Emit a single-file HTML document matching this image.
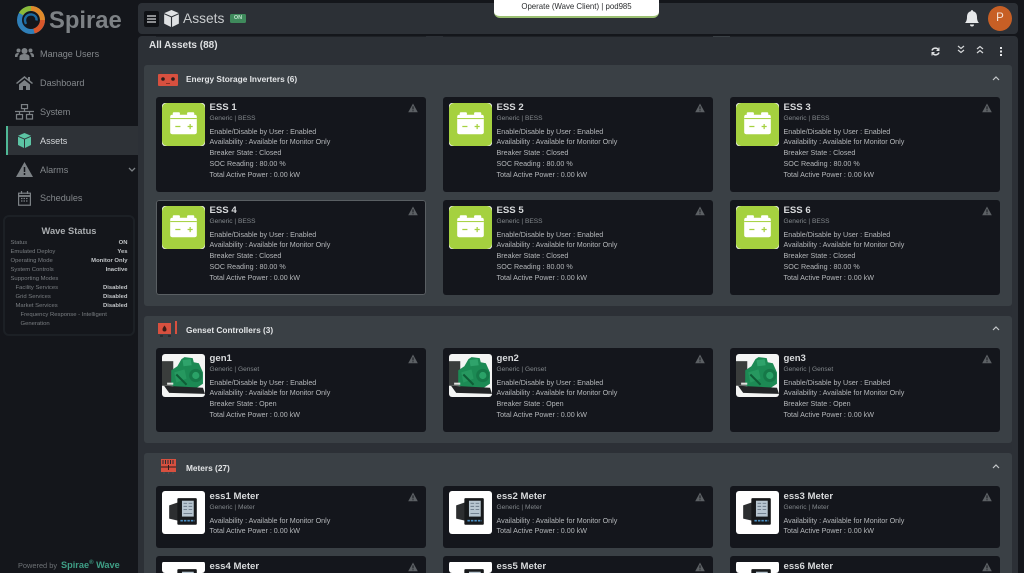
<!DOCTYPE html>
<html><head><meta charset="utf-8"><title>Assets</title>
<style>
html,body{margin:0;padding:0;background:#14161b;width:1024px;height:573px;overflow:hidden}
#root{position:absolute;left:0;top:0;width:1024px;height:573px;overflow:hidden;font-family:"Liberation Sans",sans-serif;background:#14161b}
.abs{position:absolute;white-space:nowrap}
.panel{position:absolute;left:138px;top:36px;width:880px;height:537px;background:#2c3036;border-radius:4px 4px 0 0}
.head{position:absolute;left:138px;top:3px;width:880px;height:31px;background:#2c3036;border-radius:4px}
.group{position:absolute;left:144px;width:868px;background:#3a4045;border-radius:3px}
.gt{position:absolute;left:186px;font-size:8.3px;font-weight:bold;color:#e3e5e7;white-space:nowrap;line-height:12px}
.c{position:absolute;width:270px;background:#14161c;border-radius:3px;overflow:hidden}
.c .im{position:absolute;left:6px;top:6px;width:42.500px;height:42.500px;border-radius:3px;overflow:hidden}
.c .im.m{top:5px}
.c .t{position:absolute;left:53.500px;top:5px;font-size:9.600px;font-weight:bold;color:#d8dadc;line-height:12px;white-space:nowrap}
.c .s{position:absolute;left:53.500px;top:17px;font-size:6.600px;color:#83888c;line-height:10px;white-space:nowrap}
.c .l{position:absolute;left:53.500px;top:29.500px;font-size:7.150px;color:#b4b7ba;line-height:10.750px;white-space:nowrap}
.c .w{position:absolute;left:252px;top:5.500px}
.nav{position:absolute;left:40px;font-size:9.100px;color:#84888c;line-height:12px;white-space:nowrap}
.nic{position:absolute}
.r{position:absolute;left:10.500px;width:117px;font-size:5.900px;line-height:9px;color:#7a7e82;white-space:nowrap}
.r b{position:absolute;right:0;top:0;color:#c2c5c8;font-weight:bold}
</style></head>
<body>
<div id="root">
<svg width="0" height="0" style="position:absolute">
<defs>
<symbol id="batt" viewBox="0 0 42 42"><rect width="42" height="42" fill="#fff"/><rect width="42" height="42" rx="5" fill="#a5d13f"/><rect x="10.500" y="9" width="7" height="3" rx="1" fill="#fff"/><rect x="24.500" y="9" width="7" height="3" rx="1" fill="#fff"/><rect x="8" y="11.500" width="26" height="19" rx="2" fill="#fff"/><rect x="8" y="14.700" width="26" height="1" fill="#a5d13f"/><path d="M13 23h5M25 23h5M27.500 20.500v5" stroke="#a5d13f" stroke-width="1.200"/></symbol>
<symbol id="warn" viewBox="0 0 10 10"><path d="M5 .5 9.800 9.200H.2z" fill="#5c6064"/><path d="M5 3.400v3M5 7.200v1" stroke="#14161c" stroke-width="1"/></symbol>
<symbol id="gen" viewBox="0 0 42 42"><rect width="42" height="42" fill="#f4f5f4"/><rect x="0" y="7" width="11" height="24" fill="#3a3d3c"/><path d="M9 16 15 12 19 5 22 3 30 4 31 8 36 9 40 18 40 29 34 33 16 35 9 30z" fill="#1c8a54"/><path d="M20 6 28 5 29 11 21 12z" fill="#2fa36b"/><path d="M12 18 22 15 24 24 14 28z" fill="#26985f"/><circle cx="33" cy="21" r="6.500" fill="#167848"/><circle cx="33" cy="21" r="3.500" fill="#2aa267"/><path d="M2 31 40 33 42 39 7 38z" fill="#222426"/><path d="M14 20 24 30" stroke="#0f5c36" stroke-width="2"/><rect x="5" y="28" width="6" height="2" fill="#dfe2df"/></symbol>
<symbol id="meter" viewBox="0 0 42 42"><rect width="42" height="42" fill="#fff"/><path d="M7 14 16 11 16 29 7 27z" fill="#2c2e30"/><rect x="15" y="7" width="19" height="26" rx="1" fill="#17191b"/><rect x="19.500" y="9.500" width="11.500" height="15.500" fill="#b8c6d0"/><path d="M21 12h3.500M26 12h3.500M21 15h3.500M26 15h3.500M21 18h3.500M26 18h3.500M21 22h8.500" stroke="#6b7a88" stroke-width=".9"/><path d="M18 29h14" stroke="#4a8fc4" stroke-width="1.600" stroke-dasharray="2.400 1"/></symbol>
</defs>
</svg>

<!-- Sidebar -->
<svg class="abs" style="left:16px;top:5px" width="30" height="30" viewBox="0 0 30 30" fill="none">
<circle cx="15" cy="15" r="11.500" stroke="#2f7fb8" stroke-width="5"/>
<path d="M15 3.500A11.500 11.500 0 0 1 26.500 15" stroke="#e08a2a" stroke-width="5"/>
<path d="M5 9A11.500 11.500 0 0 1 15 3.500" stroke="#8bbb3a" stroke-width="5"/>
<path d="M26.500 15A11.500 11.500 0 0 1 18 26" stroke="#d8562a" stroke-width="5"/>
<path d="M10 19C7 13 11 9 16 9.500c3 .5 5 3 4.500 6" stroke="#1c6aa0" stroke-width="2.400"/>
</svg>
<div class="abs" style="left:49px;top:5px;font-size:23.800px;font-weight:bold;color:#7d8185;line-height:32px">Spirae</div>

<svg class="nic" style="left:15px;top:47px" width="19" height="14" viewBox="0 0 19 14" fill="#7c8185"><circle cx="9.500" cy="4" r="3"/><circle cx="3.500" cy="3.500" r="2"/><circle cx="15.500" cy="3.500" r="2"/><path d="M4.500 13V10c0-2 2-3 5-3s5 1 5 3v3z"/><path d="M0 9c0-2 1-3 3.500-3L4 7c-1 .5-1.500 1.500-1.500 3H0zM19 9c0-2-1-3-3.500-3L15 7c1 .5 1.500 1.500 1.500 3H19z"/></svg>
<div class="nav" style="top:48px">Manage Users</div>
<svg class="nic" style="left:16px;top:76px" width="17" height="14" viewBox="0 0 17 14" fill="#7c8185"><path d="M8.500 0 0 7l1 1 7.500-6 7.500 6 1-1-3-2.500V1h-2v2z"/><path d="M3 8.500 8.500 4l5.500 4.500V14h-4v-4H7v4H3z"/></svg>
<div class="nav" style="top:77px">Dashboard</div>
<svg class="nic" style="left:15px;top:104px" width="19" height="16" viewBox="0 0 19 16" fill="none" stroke="#7c8185" stroke-width="1.200"><rect x="6.500" y=".6" width="6" height="4"/><rect x="1.500" y="10.500" width="6" height="4.500"/><rect x="11.500" y="10.500" width="6" height="4.500"/><path d="M9.500 4.600V7.500M0 7.500H19M4.500 7.500V10.500M14.500 7.500V10.500"/></svg>
<div class="nav" style="top:106px">System</div>

<div class="abs" style="left:6px;top:126px;width:132px;height:29px;background:#2e3237;border-left:2px solid #4fb896;box-sizing:border-box"></div>
<svg class="nic" style="left:18px;top:133px" width="13" height="15" viewBox="0 0 13 15"><path d="M6.500 0 13 2.800 6.500 5.600 0 2.800z" fill="#5cc4a4"/><path d="M0 3.800 6 6.400V15L0 12z" fill="#5cc4a4"/><path d="M13 3.800 7 6.400V15l6-3z" fill="#5cc4a4"/></svg>
<div class="nav" style="top:135px;color:#d4d7da">Assets</div>

<svg class="nic" style="left:16px;top:162px" width="17" height="15" viewBox="0 0 17 15"><path d="M8.500 0 17 15H0z" fill="#7c8185"/><path d="M8.500 5v5M8.500 11v2" stroke="#14161b" stroke-width="1.500"/></svg>
<div class="nav" style="top:164px">Alarms</div>
<svg class="nic" style="left:128px;top:167px" width="8" height="5" viewBox="0 0 8 5" fill="none"><path d="M1 1l3 3 3-3" stroke="#7c8185" stroke-width="1.300"/></svg>
<svg class="nic" style="left:18px;top:191px" width="13" height="15" viewBox="0 0 13 15" fill="none" stroke="#7c8185" stroke-width="1.200"><rect x=".6" y="2.200" width="11.800" height="12"/><path d="M3.500 0v3M9.500 0v3"/><path d="M.6 5h11.800" stroke-width="1.800"/><path d="M3 7.500h7M3 10h7" stroke-width="1.300" stroke-dasharray="1.500 1"/></svg>
<div class="nav" style="top:192px">Schedules</div>

<div class="abs" style="left:3px;top:215px;width:132px;height:121px;border:2px solid #1c2025;border-radius:6px;background:#14161b;box-sizing:border-box"></div>
<div class="abs" style="left:3px;width:132px;top:225px;text-align:center;font-size:9.300px;font-weight:bold;color:#a9acaf;line-height:12px">Wave Status</div>
<div class="r" style="top:238.500px">Status<b>ON</b></div>
<div class="r" style="top:247.500px">Emulated Deploy<b>Yes</b></div>
<div class="r" style="top:256.500px">Operating Mode<b>Monitor Only</b></div>
<div class="r" style="top:265.500px">System Controls<b>Inactive</b></div>
<div class="r" style="top:274.500px">Supporting Modes</div>
<div class="r" style="top:283.500px"><span style="margin-left:5px">Facility Services</span><b>Disabled</b></div>
<div class="r" style="top:292.500px"><span style="margin-left:5px">Grid Services</span><b>Disabled</b></div>
<div class="r" style="top:301.500px"><span style="margin-left:5px">Market Services</span><b>Disabled</b></div>
<div class="r" style="top:310.500px"><span style="margin-left:10px">Frequency Response - Intelligent</span></div>
<div class="r" style="top:319.500px"><span style="margin-left:10px">Generation</span></div>

<div class="abs" style="left:18px;top:561px;font-size:7.400px;color:#6d7175;line-height:10px">Powered by</div>
<div class="abs" style="left:61px;top:559px;font-size:9.200px;font-weight:bold;color:#3f9f86;line-height:12px">Spirae<sup style="font-size:6px;line-height:0">®</sup> Wave</div>

<!-- Header -->
<div class="head"></div>
<div class="abs" style="left:144px;top:11px;width:15px;height:16px;background:#0f1115;border-radius:2px"></div>
<svg class="abs" style="left:147px;top:15px" width="9" height="8" viewBox="0 0 9 8"><path d="M0 1h9M0 4h9M0 7h9" stroke="#d8dadc" stroke-width="1.200"/></svg>
<svg class="abs" style="left:164px;top:10px" width="15" height="17" viewBox="0 0 13 15"><path d="M6.500 0 13 2.800 6.500 5.600 0 2.800z" fill="#dfe1e3"/><path d="M0 3.800 6 6.400V15L0 12z" fill="#dfe1e3"/><path d="M13 3.800 7 6.400V15l6-3z" fill="#dfe1e3"/></svg>
<div class="abs" style="left:183px;top:10px;font-size:13.800px;color:#c9ccce;line-height:17px">Assets</div>
<div class="abs" style="left:230px;top:13.500px;width:16px;height:9.500px;background:#3f8a5c;border-radius:1.500px;color:#bfe3cd;font-size:5.500px;font-weight:bold;line-height:9.500px;text-align:center">ON</div>

<div class="abs" style="left:494px;top:0;width:165px;height:18px;background:#fff;border-bottom:2px solid #9cc073;border-radius:0 0 6px 6px;box-sizing:border-box"></div>
<div class="abs" style="left:494px;top:1.500px;width:165px;text-align:center;font-size:7.850px;color:#2a2c2e;line-height:10px">Operate (Wave Client) | pod985</div>

<svg class="abs" style="left:965px;top:10px" width="14" height="17" viewBox="0 0 14 17" fill="#e6e8ea"><path d="M7 0c.7 0 1 .5 1 1.200C10.800 1.800 12 4 12 7c0 3 .8 4.800 2 6H0c1.200-1.200 2-3 2-6 0-3 1.200-5.200 4-5.800C6 .5 6.300 0 7 0z"/><path d="M5 14.500h4a2 2 0 0 1-4 0z"/></svg>
<div class="abs" style="left:988px;top:6px;width:24px;height:25px;background:#c75f25;border-radius:50%;color:#f5e6dc;font-size:11.500px;line-height:25px;text-align:center">P</div>

<!-- Main -->
<div class="panel"></div>
<div class="abs" style="left:149px;top:38.500px;font-size:10px;font-weight:bold;color:#dfe1e3;line-height:13px">All Assets (88)</div>
<svg class="abs" style="left:931px;top:47px" width="9" height="9" viewBox="0 0 9 9" fill="none" stroke="#e0e2e4" stroke-width="1.500"><path d="M1 3.500A3.600 3.600 0 0 1 7.500 3M8 5.500A3.600 3.600 0 0 1 1.500 6"/><path d="M8 .5v3H5.500M1 8.500v-3h2.500" stroke-width="1"/></svg>
<svg class="abs" style="left:957px;top:45px" width="8" height="9" viewBox="0 0 8 9" fill="none" stroke="#d5d7d9" stroke-width="1.200"><path d="M1 1l3 2.500L7 1M1 5l3 2.500L7 5"/></svg>
<svg class="abs" style="left:976px;top:45px" width="8" height="9" viewBox="0 0 8 9" fill="none" stroke="#d5d7d9" stroke-width="1.200"><path d="M1 4l3-2.500L7 4M1 8l3-2.500L7 8"/></svg>
<svg class="abs" style="left:998.500px;top:47px" width="4" height="9" viewBox="0 0 4 9" fill="#e6e8ea"><rect x="1" y="0" width="2" height="2"/><rect x="1" y="3.500" width="2" height="2"/><rect x="1" y="7" width="2" height="2"/></svg>
<div class="abs" style="left:712px;top:36px;width:18px;height:1px;background:#3a4045"></div>
<div class="abs" style="left:156px;top:36px;width:270px;height:1px;background:#1e2126"></div>
<div class="abs" style="left:443px;top:36px;width:270px;height:1px;background:#1e2126"></div>
<div class="abs" style="left:730px;top:36px;width:270px;height:1px;background:#1e2126"></div>

<!-- Group 1 -->
<div class="group" style="top:65px;height:241px"></div>
<svg class="abs" style="left:158px;top:69px" width="20" height="18" viewBox="0 0 20 18"><path d="M3 5V2M17 5V2" stroke="#4a3a3a" stroke-width="1.200"/><rect x="0" y="5" width="20" height="12" rx="1" fill="#d7503f"/><circle cx="5" cy="10" r="1.800" fill="#2a1d1c"/><circle cx="15" cy="10" r="1.800" fill="#2a1d1c"/><path d="M8 14.500h4" stroke="#8a3026" stroke-width="1"/></svg>
<div class="gt" style="top:73px">Energy Storage Inverters (6)</div>
<svg class="abs" style="left:992px;top:76px" width="8" height="5" viewBox="0 0 8 5" fill="none"><path d="M1 4l3-3 3 3" stroke="#c5c8ca" stroke-width="1.200"/></svg>

<div class="c" style="left:156px;top:97px;height:95px"><div class="im"><svg width="43" height="43"><use href="#batt"/></svg></div><div class="t">ESS 1</div><div class="s">Generic | BESS</div><div class="l">Enable/Disable by User : Enabled<br>Availability : Available for Monitor Only<br>Breaker State : Closed<br>SOC Reading : 80.00 %<br>Total Active Power : 0.00 kW</div><svg class="w" width="10" height="10"><use href="#warn"/></svg></div>
<div class="c" style="left:443px;top:97px;height:95px"><div class="im"><svg width="43" height="43"><use href="#batt"/></svg></div><div class="t">ESS 2</div><div class="s">Generic | BESS</div><div class="l">Enable/Disable by User : Enabled<br>Availability : Available for Monitor Only<br>Breaker State : Closed<br>SOC Reading : 80.00 %<br>Total Active Power : 0.00 kW</div><svg class="w" width="10" height="10"><use href="#warn"/></svg></div>
<div class="c" style="left:730px;top:97px;height:95px"><div class="im"><svg width="43" height="43"><use href="#batt"/></svg></div><div class="t">ESS 3</div><div class="s">Generic | BESS</div><div class="l">Enable/Disable by User : Enabled<br>Availability : Available for Monitor Only<br>Breaker State : Closed<br>SOC Reading : 80.00 %<br>Total Active Power : 0.00 kW</div><svg class="w" width="10" height="10"><use href="#warn"/></svg></div>
<div class="c" style="left:156px;top:200px;height:95px;box-shadow:inset 0 0 0 1px #5a5f63"><div class="im"><svg width="43" height="43"><use href="#batt"/></svg></div><div class="t">ESS 4</div><div class="s">Generic | BESS</div><div class="l">Enable/Disable by User : Enabled<br>Availability : Available for Monitor Only<br>Breaker State : Closed<br>SOC Reading : 80.00 %<br>Total Active Power : 0.00 kW</div><svg class="w" width="10" height="10"><use href="#warn"/></svg></div>
<div class="c" style="left:443px;top:200px;height:95px"><div class="im"><svg width="43" height="43"><use href="#batt"/></svg></div><div class="t">ESS 5</div><div class="s">Generic | BESS</div><div class="l">Enable/Disable by User : Enabled<br>Availability : Available for Monitor Only<br>Breaker State : Closed<br>SOC Reading : 80.00 %<br>Total Active Power : 0.00 kW</div><svg class="w" width="10" height="10"><use href="#warn"/></svg></div>
<div class="c" style="left:730px;top:200px;height:95px"><div class="im"><svg width="43" height="43"><use href="#batt"/></svg></div><div class="t">ESS 6</div><div class="s">Generic | BESS</div><div class="l">Enable/Disable by User : Enabled<br>Availability : Available for Monitor Only<br>Breaker State : Closed<br>SOC Reading : 80.00 %<br>Total Active Power : 0.00 kW</div><svg class="w" width="10" height="10"><use href="#warn"/></svg></div>

<!-- Group 2 -->
<div class="group" style="top:316px;height:127px"></div>
<svg class="abs" style="left:158px;top:320px" width="20" height="18" viewBox="0 0 20 18"><rect x="0" y="3" width="13" height="11" fill="#d7503f"/><rect x="17" y="1" width="2" height="13" fill="#d7503f"/><path d="M6.500 5.500c1.500 2 2 3 2 4a2 2 0 0 1-4 0c0-1 .5-2 2-4z" fill="#3a1c18"/><path d="M2 16h3M10 16h3" stroke="#2a2c30" stroke-width="2"/></svg>
<div class="gt" style="top:324px">Genset Controllers (3)</div>
<svg class="abs" style="left:992px;top:326px" width="8" height="5" viewBox="0 0 8 5" fill="none"><path d="M1 4l3-3 3 3" stroke="#c5c8ca" stroke-width="1.200"/></svg>

<div class="c" style="left:156px;top:348px;height:84px"><div class="im"><svg width="43" height="43"><use href="#gen"/></svg></div><div class="t">gen1</div><div class="s">Generic | Genset</div><div class="l">Enable/Disable by User : Enabled<br>Availability : Available for Monitor Only<br>Breaker State : Open<br>Total Active Power : 0.00 kW</div><svg class="w" width="10" height="10"><use href="#warn"/></svg></div>
<div class="c" style="left:443px;top:348px;height:84px"><div class="im"><svg width="43" height="43"><use href="#gen"/></svg></div><div class="t">gen2</div><div class="s">Generic | Genset</div><div class="l">Enable/Disable by User : Enabled<br>Availability : Available for Monitor Only<br>Breaker State : Open<br>Total Active Power : 0.00 kW</div><svg class="w" width="10" height="10"><use href="#warn"/></svg></div>
<div class="c" style="left:730px;top:348px;height:84px"><div class="im"><svg width="43" height="43"><use href="#gen"/></svg></div><div class="t">gen3</div><div class="s">Generic | Genset</div><div class="l">Enable/Disable by User : Enabled<br>Availability : Available for Monitor Only<br>Breaker State : Open<br>Total Active Power : 0.00 kW</div><svg class="w" width="10" height="10"><use href="#warn"/></svg></div>

<!-- Group 3 -->
<div class="group" style="top:453px;height:120px;border-radius:3px 3px 0 0"></div>
<svg class="abs" style="left:160px;top:458px" width="17" height="17" viewBox="0 0 17 17"><rect x="1" y="1" width="15" height="13" fill="#d7503f"/><path d="M3 2v4M5.500 2v4M8 2v4M10.500 2v4M13 2v4" stroke="#2a2c30" stroke-width="1"/><path d="M1 9h15M8.500 7v5" stroke="#2a1d1c" stroke-width="1"/><path d="M4 14v2M8.500 14v2M13 14v2" stroke="#4b4f53"/></svg>
<div class="gt" style="top:462px">Meters (27)</div>
<svg class="abs" style="left:992px;top:464px" width="8" height="5" viewBox="0 0 8 5" fill="none"><path d="M1 4l3-3 3 3" stroke="#c5c8ca" stroke-width="1.200"/></svg>

<div class="c" style="left:156px;top:486px;height:62px"><div class="im m"><svg width="43" height="43"><use href="#meter"/></svg></div><div class="t">ess1 Meter</div><div class="s">Generic | Meter</div><div class="l">Availability : Available for Monitor Only<br>Total Active Power : 0.00 kW</div><svg class="w" width="10" height="10"><use href="#warn"/></svg></div>
<div class="c" style="left:443px;top:486px;height:62px"><div class="im m"><svg width="43" height="43"><use href="#meter"/></svg></div><div class="t">ess2 Meter</div><div class="s">Generic | Meter</div><div class="l">Availability : Available for Monitor Only<br>Total Active Power : 0.00 kW</div><svg class="w" width="10" height="10"><use href="#warn"/></svg></div>
<div class="c" style="left:730px;top:486px;height:62px"><div class="im m"><svg width="43" height="43"><use href="#meter"/></svg></div><div class="t">ess3 Meter</div><div class="s">Generic | Meter</div><div class="l">Availability : Available for Monitor Only<br>Total Active Power : 0.00 kW</div><svg class="w" width="10" height="10"><use href="#warn"/></svg></div>
<div class="c" style="left:156px;top:556px;height:17px;border-radius:3px 3px 0 0"><div class="im m" style="height:12px"><svg width="43" height="12" viewBox="0 0 43 12"><use href="#meter" width="43" height="43"/></svg></div><div class="t">ess4 Meter</div><svg class="w" width="10" height="10"><use href="#warn"/></svg></div>
<div class="c" style="left:443px;top:556px;height:17px;border-radius:3px 3px 0 0"><div class="im m" style="height:12px"><svg width="43" height="12" viewBox="0 0 43 12"><use href="#meter" width="43" height="43"/></svg></div><div class="t">ess5 Meter</div><svg class="w" width="10" height="10"><use href="#warn"/></svg></div>
<div class="c" style="left:730px;top:556px;height:17px;border-radius:3px 3px 0 0"><div class="im m" style="height:12px"><svg width="43" height="12" viewBox="0 0 43 12"><use href="#meter" width="43" height="43"/></svg></div><div class="t">ess6 Meter</div><svg class="w" width="10" height="10"><use href="#warn"/></svg></div>
</div>
</body></html>
